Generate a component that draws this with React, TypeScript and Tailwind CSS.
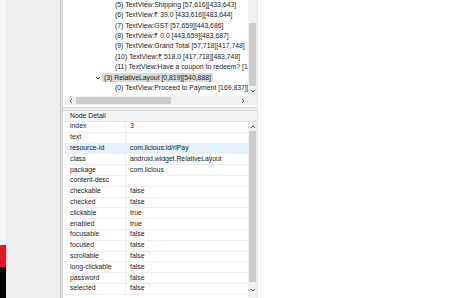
import React from "react";

const treeRows = [
  { label: "(5) TextView:Shipping [57,616][433,643]" },
  { label: "(6) TextView:₹ 39.0 [433,616][483,644]" },
  { label: "(7) TextView:GST [57,659][443,686]" },
  { label: "(8) TextView:₹ 0.0 [443,659][483,687]" },
  { label: "(9) TextView:Grand Total [57,718][417,748]" },
  { label: "(10) TextView:₹ 518.0 [417,718][483,748]" },
  { label: "(11) TextView:Have a coupon to redeem? [169,760][483,790]" },
  { label: "(3) RelativeLayout [0,819][540,888]", parent: true },
  { label: "(0) TextView:Proceed to Payment [169,837][371,870]" },
];

const details: [string, string][] = [
  ["index", "3"],
  ["text", ""],
  ["resource-id", "com.licious:id/rlPay"],
  ["class", "android.widget.RelativeLayout"],
  ["package", "com.licious"],
  ["content-desc", ""],
  ["checkable", "false"],
  ["checked", "false"],
  ["clickable", "true"],
  ["enabled", "true"],
  ["focusable", "false"],
  ["focused", "false"],
  ["scrollable", "false"],
  ["long-clickable", "false"],
  ["password", "false"],
  ["selected", "false"],
];

const Chevron = ({ dir }: { dir: "up" | "down" | "left" | "right" }) => {
  const paths = {
    up: "M1 4 L3 2 L5 4",
    down: "M1 2 L3 4 L5 2",
    left: "M4 1 L2 3 L4 5",
    right: "M2 1 L4 3 L2 5",
  };
  return (
    <svg width="6" height="6" viewBox="0 0 6 6" className="shrink-0">
      <path d={paths[dir]} fill="none" stroke="#606060" strokeWidth="1" />
    </svg>
  );
};

export default function App() {
  return (
    <div
      className="flex w-[474px] h-[298px] overflow-hidden bg-white text-[#1a1a1a] text-[6.85px] leading-none"
      style={{ fontFamily: '"Liberation Sans", Arial, sans-serif' }}
    >
      {/* far left edge */}
      <div className="flex flex-col w-[6px] shrink-0">
        <div className="h-[245px] bg-[#f7f7f7]" />
        <div className="h-[22px] bg-[#e3182d]" />
        <div className="flex-1 bg-black" />
      </div>

      {/* gray side strip */}
      <div className="w-[54px] shrink-0 bg-[#eeeeee]" />
      <div className="w-px shrink-0 bg-[#c4c4c4]" />
      <div className="w-px shrink-0 bg-[#eeeeee]" />
      <div className="w-px shrink-0 bg-[#cccccc]" />

      {/* main panel */}
      <div className="flex flex-col w-[195px] shrink-0 border-r border-[#e6e6e6]">
        {/* hierarchy tree */}
        <div className="flex flex-col h-[107px] pl-[2px]">
          <div className="flex h-[96px]">
            <div className="flex-1 overflow-hidden">
              {treeRows.map((r) =>
                r.parent ? (
                  <div key={r.label} className="flex items-center h-[10.4px] pl-[30px] whitespace-nowrap">
                    <svg width="6" height="6" viewBox="0 0 6 6" className="shrink-0">
                      <path d="M1 2 L3 4 L5 2" fill="none" stroke="#555" strokeWidth="1" />
                    </svg>
                    <span className="ml-[1px] bg-[#dadada] h-[9px] flex items-center px-[2px]">{r.label}</span>
                  </div>
                ) : (
                  <div key={r.label} className="flex items-center h-[10.4px] pl-[50px] whitespace-nowrap">
                    {r.label}
                  </div>
                )
              )}
            </div>
            <div className="flex flex-col w-[9px] bg-[#f0f0f0]">
              <div className="h-[23px]" />
              <div className="h-[63px] mx-[1px] bg-[#cdcdcd]" />
              <div className="flex-1 flex items-center justify-center">
                <Chevron dir="down" />
              </div>
            </div>
          </div>
          <div className="flex h-[9px]">
            <div className="flex-1 flex items-center bg-[#f0f0f0]">
              <div className="w-[11px] flex justify-center">
                <Chevron dir="left" />
              </div>
              <div className="w-[95px] h-[7px] bg-[#cdcdcd]" />
              <div className="flex-1" />
              <div className="w-[11px] flex justify-center">
                <Chevron dir="right" />
              </div>
            </div>
            <div className="w-[9px] bg-[#f0f0f0]" />
          </div>
        </div>

        {/* splitter */}
        <div className="h-[4px] border-t border-b border-[#d4d4d4] bg-[#f2f2f2]" />

        {/* node detail */}
        <div className="flex flex-col flex-1 pl-[2px]">
          <div className="flex items-center h-[11px] pl-[5px] bg-[#f4f4f4] border-b border-[#e4e4e4]">
            Node Detail
          </div>
          <div className="flex flex-1">
            <div className="flex-1 flex flex-col">
              {details.map(([k, v]) => (
                <div
                  key={k}
                  className={`flex h-[10.8px] border-b border-[#f0f0f0] ${
                    k === "resource-id" ? "bg-[#e5f1fb]" : ""
                  }`}
                >
                  <div className="w-[61px] pl-[5px] flex items-center border-r border-[#f0f0f0]">{k}</div>
                  <div className="flex-1 pl-[4px] flex items-center whitespace-nowrap overflow-hidden">{v}</div>
                </div>
              ))}
            </div>
            <div className="flex flex-col w-[9px] bg-[#f0f0f0]">
              <div className="h-[9px] flex items-center justify-center">
                <Chevron dir="up" />
              </div>
              <div className="h-[151px] mx-[1px] bg-[#cdcdcd]" />
              <div className="flex-1 flex items-center justify-center">
                <Chevron dir="down" />
              </div>
            </div>
          </div>
        </div>
      </div>

      <div className="flex-1 bg-white" />
    </div>
  );
}
